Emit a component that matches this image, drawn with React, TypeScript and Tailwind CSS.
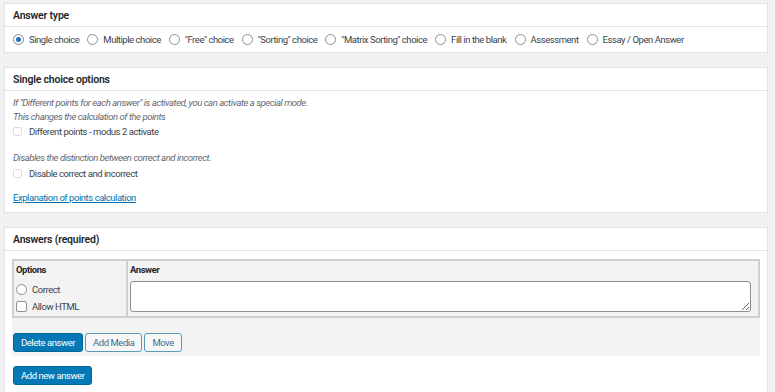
import React from 'react';

const types = [
  'Single choice',
  'Multiple choice',
  '"Free" choice',
  '"Sorting" choice',
  '"Matrix Sorting" choice',
  'Fill in the blank',
  'Assessment',
  'Essay / Open Answer',
];

const Radio = ({ checked = false }: { checked?: boolean }) => (
  <span
    className={`inline-flex h-[11px] w-[11px] shrink-0 items-center justify-center rounded-full border bg-white ${
      checked ? 'border-[#7e8993]' : 'border-[#8c8f94]'
    }`}
  >
    {checked && <span className="h-[5px] w-[5px] rounded-full bg-[#1e73be]" />}
  </span>
);

const Panel = ({ title, children }: { title: string; children: React.ReactNode }) => (
  <div className="border border-[#e2e4e7] bg-white">
    <div className="flex h-[23px] items-center border-b border-[#e2e4e7] px-2 text-[10.5px] font-semibold tracking-[-0.2px] text-[#23282d]">
      {title}
    </div>
    {children}
  </div>
);

export default function App() {
  return (
    <div className="min-h-screen bg-[#f1f1f1] pl-[4px] pr-[7px] pt-[3px] font-['Roboto',sans-serif] text-[9.5px] leading-[13px] tracking-[-0.45px] text-[#3c434a]">
      <Panel title="Answer type">
        <div className="flex h-[25px] items-center gap-[8px] px-2">
          {types.map((t, i) => (
            <label key={t} className="flex items-center gap-[5px]">
              <Radio checked={i === 0} />
              <span>{t}</span>
            </label>
          ))}
        </div>
      </Panel>

      <div className="mt-[14px]">
        <Panel title="Single choice options">
          <div className="px-2 pb-[8px] pt-[5px]">
            <p className="italic text-[#646970]">
              If "Different points for each answer" is activated, you can activate a special mode.
            </p>
            <p className="mt-[1px] italic text-[#646970]">This changes the calculation of the points</p>
            <label className="flex h-[16px] items-center gap-[7px]">
              <span className="h-[9px] w-[9px] rounded-[2px] border border-[#dcdcde] bg-white" />
              <span>Different points - modus 2 activate</span>
            </label>
            <p className="mt-[12px] italic text-[#646970]">Disables the distinction between correct and incorrect.</p>
            <label className="mt-[1px] flex h-[16px] items-center gap-[7px]">
              <span className="h-[9px] w-[9px] rounded-[2px] border border-[#dcdcde] bg-white" />
              <span>Disable correct and incorrect</span>
            </label>
            <a className="mt-[10px] block text-[#0073aa] underline">Explanation of points calculation</a>
          </div>
        </Panel>
      </div>

      <div className="mt-[14px]">
        <Panel title="Answers (required)">
          <div className="px-[7px] pt-[8px]">
            <div className="flex border-2 border-[#d0d0d0] bg-[#f3f3f3]">
              <div className="w-[114px] border-r-2 border-[#d0d0d0] px-[2px] pb-[3px] pt-[2px]">
                <div className="font-bold text-[#23282d]">Options</div>
                <label className="mt-[7px] flex items-center gap-[5px]">
                  <Radio />
                  <span>Correct</span>
                </label>
                <label className="mt-[4px] flex items-center gap-[5px]">
                  <span className="h-[11px] w-[11px] rounded-[2px] border border-[#8c8f94] bg-white" />
                  <span>Allow HTML</span>
                </label>
              </div>
              <div className="flex-1 px-[2px] pt-[2px]">
                <div className="font-bold text-[#23282d]">Answer</div>
                <textarea className="mt-[5px] block h-[31px] w-[621px] rounded-[3px] border border-[#8c8f94] bg-white" />
              </div>
            </div>
            <div className="flex gap-[2px] bg-[#f3f3f3] px-[1px] pb-[4px] pt-[15px]">
              <button className="h-[19px] rounded-[3px] border border-[#006799] bg-[#0479b5] px-[7px] text-white">
                Delete answer
              </button>
              <button className="h-[19px] rounded-[3px] border border-[#5a99b9] bg-[#f7f7f7] px-[7px] text-[#3b6f8b]">
                Add Media
              </button>
              <button className="h-[19px] rounded-[3px] border border-[#5a99b9] bg-[#f7f7f7] px-[7px] text-[#3b6f8b]">
                Move
              </button>
            </div>
            <div className="px-[1px] pb-[10px] pt-[10px]">
              <button className="h-[19px] rounded-[3px] border border-[#006799] bg-[#0479b5] px-[7px] text-white">
                Add new answer
              </button>
            </div>
          </div>
        </Panel>
      </div>
    </div>
  );
}
